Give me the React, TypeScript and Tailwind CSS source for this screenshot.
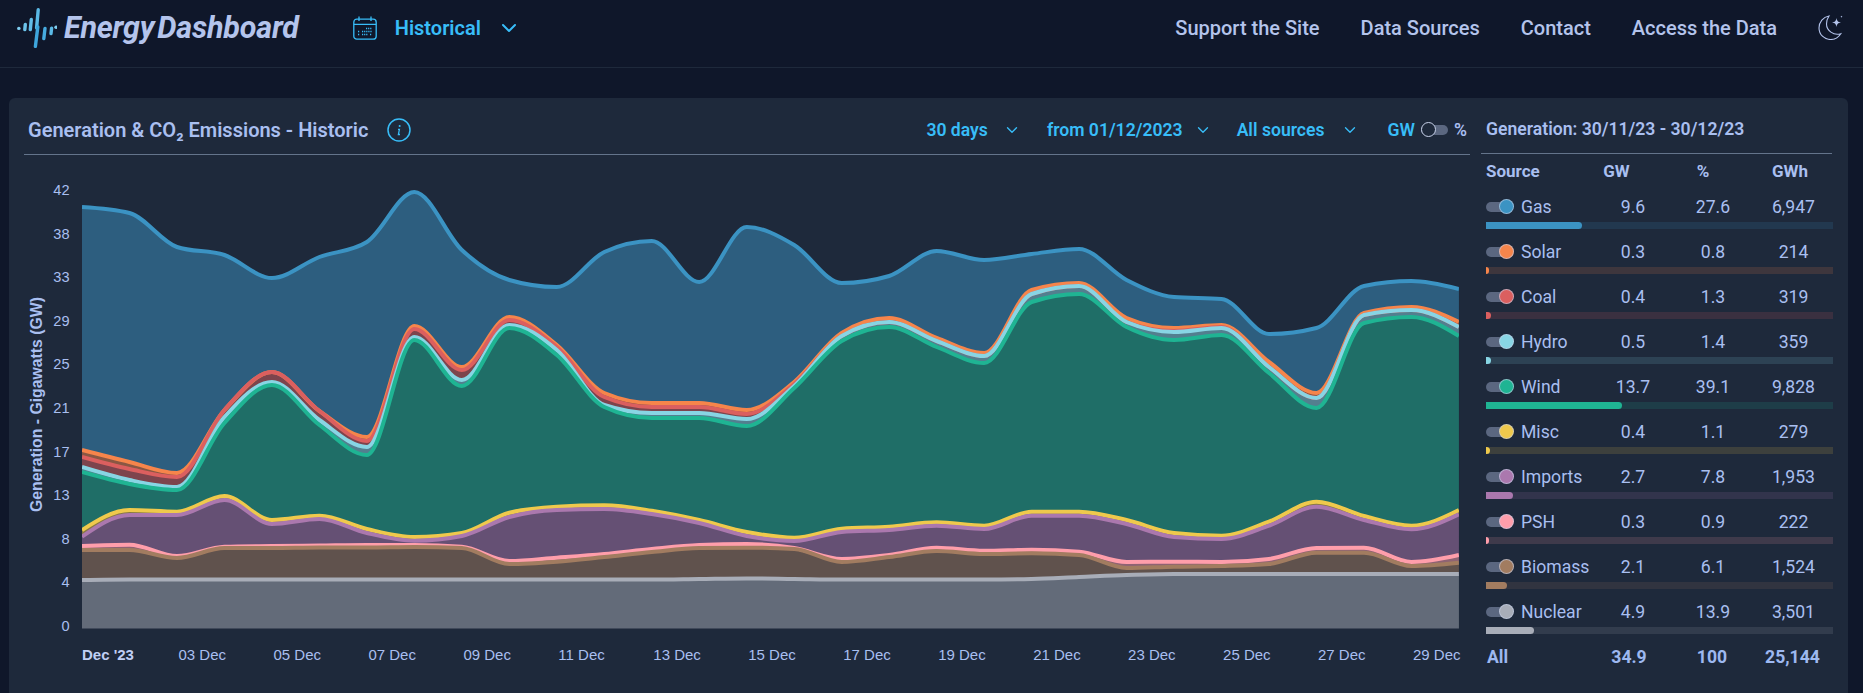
import { ChevronDown } from "lucide-react";

const X0 = 82;
const STEP = 47.48;
const BOTTOM = 628.5;

// bottom of the stack first
const series = [
  { name: "Nuclear", stroke: "#a8adb8", tops: [580,579.5,579.5,579.5,579.5,579.5,579.5,579.5,579.5,579.5,579.5,579.5,579.5,579,578.5,579,579.5,579.5,579.5,579.5,579,577,575,574,574,574,574,574,574,574] },
  { name: "Biomass", stroke: "#a27c60", tops: [550,550,558,548,548,547.5,547.5,547,548,564,561.7,557,552,548,547.7,549,562,557,551,554,553.3,555,568,566.7,566,564,552.7,552.7,566,562.7] },
  { name: "PSH", stroke: "#ff9eab", tops: [546,544.7,556,546.7,546,545.5,545,545,546.7,561,557.7,554,549,545,544,548,559,555,547.7,550.7,549.7,551.7,562,561.7,562,559,548,547.7,562,555] },
  { name: "Imports", stroke: "#ab78ae", tops: [536.7,515,515,500,524,519,533,540.7,536,517,510,509,514,523,536,541,532,530,525.7,529,515.7,515.7,524,537,539,525.7,506.7,520,529.3,514.3] },
  { name: "Misc", stroke: "#efc94c", tops: [530,510,511.7,496,520,515.7,529,537,533,512.7,506.7,505.3,510.7,520,532,537.7,528.7,526.7,522.3,525.7,511.7,511.7,520,533,535.7,521.7,501.7,516,525.7,510] },
  { name: "Wind", stroke: "#1fb493", tops: [472,484,490,423,385,425,455,340,386,328,355,407,418,418,426,388,341,327,347,363,302,294,327,340,335,373,408,323,317,336] },
  { name: "Hydro", stroke: "#88d5e4", tops: [467,480,487,417,382,420,447,337,380,325,350,405,413,413,419,386,336,322,341,356,294,286,322,332,328,367,398,315,310,327] },
  { name: "Coal", stroke: "#db5f5f", tops: [457,469,477,410,372,411,441,329,370,320,347,397,407,407,414,384,336,322,341,356,294,286,322,331,327,367,398,315,310,327] },
  { name: "Solar", stroke: "#f6854b", tops: [450,462,473,410,372,411,437,326,367,317,345,393,403,403,410,382,333,318,338,353,290,283,318,328,325,362,393,313,307,322] },
  { name: "Gas", stroke: "#3b93c3", tops: [207,213,247,255,278,257,242,192,250,280,287,252,241,282,227,245,283,276,251,260,254,249,280,297,299,334,328,286,281,289] },
];

// monotone-x tangents
const tangents = (y: number[]) => {
  const s = y.slice(1).map((v, i) => (v - y[i]) / STEP);
  const t = y.map((_, i) => {
    if (i === 0 || i === y.length - 1) return 0;
    const a = s[i - 1];
    const b = s[i];
    return (Math.sign(a) + Math.sign(b)) * Math.min(Math.abs(a), Math.abs(b), 0.25 * Math.abs(a + b));
  });
  t[0] = (3 * s[0] - t[1]) / 2;
  t[y.length - 1] = (3 * s[s.length - 1] - t[y.length - 2]) / 2;
  return t;
};

const px = (i: number) => X0 + i * STEP;

const linePath = (y: number[]) => {
  const t = tangents(y);
  let d = `M${px(0)},${y[0]}`;
  for (let i = 0; i < y.length - 1; i++) {
    d += `C${px(i) + STEP / 3},${y[i] + (STEP * t[i]) / 3},${px(i + 1) - STEP / 3},${y[i + 1] - (STEP * t[i + 1]) / 3},${px(i + 1)},${y[i + 1]}`;
  }
  return d;
};

const backPath = (y: number[]) => {
  const t = tangents(y);
  let d = `L${px(y.length - 1)},${y[y.length - 1]}`;
  for (let i = y.length - 1; i > 0; i--) {
    d += `C${px(i) - STEP / 3},${y[i] - (STEP * t[i]) / 3},${px(i - 1) + STEP / 3},${y[i - 1] + (STEP * t[i - 1]) / 3},${px(i - 1)},${y[i - 1]}`;
  }
  return d + "Z";
};

const yTicks: [string, number][] = [["42",190],["38",234],["33",277],["29",321],["25",364],["21",408],["17",452],["13",495],["8",539],["4",582],["0",626]];
const xTicks = ["03 Dec","05 Dec","07 Dec","09 Dec","11 Dec","13 Dec","15 Dec","17 Dec","19 Dec","21 Dec","23 Dec","25 Dec","27 Dec","29 Dec"];

const rows = [
  { name: "Gas", gw: "9.6", pct: "27.6", gwh: "6,947", w: 27.6, dot: "bg-[#3b93c3]", track: "bg-[#3b93c3]/15" },
  { name: "Solar", gw: "0.3", pct: "0.8", gwh: "214", w: 0.8, dot: "bg-[#f6854b]", track: "bg-[#f6854b]/15" },
  { name: "Coal", gw: "0.4", pct: "1.3", gwh: "319", w: 1.3, dot: "bg-[#db5f5f]", track: "bg-[#db5f5f]/15" },
  { name: "Hydro", gw: "0.5", pct: "1.4", gwh: "359", w: 1.4, dot: "bg-[#88d5e4]", track: "bg-[#88d5e4]/15" },
  { name: "Wind", gw: "13.7", pct: "39.1", gwh: "9,828", w: 39.1, dot: "bg-[#1fb493]", track: "bg-[#1fb493]/15" },
  { name: "Misc", gw: "0.4", pct: "1.1", gwh: "279", w: 1.1, dot: "bg-[#efc94c]", track: "bg-[#efc94c]/15" },
  { name: "Imports", gw: "2.7", pct: "7.8", gwh: "1,953", w: 7.8, dot: "bg-[#ab78ae]", track: "bg-[#ab78ae]/15" },
  { name: "PSH", gw: "0.3", pct: "0.9", gwh: "222", w: 0.9, dot: "bg-[#ff9eab]", track: "bg-[#ff9eab]/15" },
  { name: "Biomass", gw: "2.1", pct: "6.1", gwh: "1,524", w: 6.1, dot: "bg-[#a27c60]", track: "bg-[#a27c60]/15" },
  { name: "Nuclear", gw: "4.9", pct: "13.9", gwh: "3,501", w: 13.9, dot: "bg-[#a8adb8]", track: "bg-[#a8adb8]/15" },
];

const Logo = () => (
  <svg width="40" height="40" viewBox="17 7 40 40" fill="none" strokeLinecap="round" className="shrink-0">
    <g strokeWidth="3.4">
      <path d="M18.8 27.4h.1" stroke="#7fcdf0" />
      <path d="M25.3 23.5 24.8 28.6" stroke="#6cc3ea" />
      <path d="M31.3 18.5 30.3 28.6" stroke="#62bde8" />
      <path d="M38.2 8.8 36.6 27" stroke="#5ab9e6" />
      <path d="M37.8 26 35.4 45.4" stroke="#3ea6dc" />
      <path d="M45 27.4 43.8 37.6" stroke="#46abdf" />
      <path d="M51.6 27.2 51 32.6" stroke="#5ab9e6" />
      <path d="M56 26.2h.1" stroke="#7fcdf0" />
    </g>
  </svg>
);

const CalendarIcon = () => (
  <svg width="24" height="24" viewBox="0 0 24 24" fill="none" stroke="#38bdf8" strokeWidth="1.3" className="shrink-0">
    <rect x="0.8" y="3.2" width="22.4" height="20" rx="3" />
    <path d="M0.8 8.4h22.4M6 0.5v4.4M18 0.5v4.4" />
    <path d="M5 18.5h2M9 18.5h6M17 18.5h2M9 15.5h10M13 12.5h6M5 15.5h2" strokeWidth="1.4" strokeDasharray="1.2 0.9" />
  </svg>
);

const MoonIcon = () => (
  <svg width="25" height="25" viewBox="0 0 25 25" fill="none" className="shrink-0">
    <path d="M11 1C5.2 2 1 7 1 13c0 6.6 5.3 11.5 11.5 11.5 4.4 0 8-2.2 10.3-5.8C15.5 21 8.5 15.5 8.5 9c0-3 1-5.8 2.5-8Z" stroke="#b4c4ec" strokeWidth="1.1" />
    <path d="M18.5 3c.5 3 1.4 4 4.5 4.5-3.1.5-4 1.5-4.5 4.5-.5-3-1.4-4-4.5-4.5 3.1-.5 4-1.5 4.5-4.5Z" fill="#b4c4ec" />
    <path d="M23.5 0.5c.1.8.4 1.1 1.2 1.2-.8.1-1.1.4-1.2 1.2-.1-.8-.4-1.1-1.2-1.2.8-.1 1.1-.4 1.2-1.2Z" fill="#b4c4ec" />
  </svg>
);

const InfoIcon = () => (
  <svg width="24" height="24" viewBox="0 0 24 24" fill="none" stroke="#38bdf8" strokeWidth="1.5" className="shrink-0">
    <circle cx="12" cy="12" r="11" />
    <path d="M12.6 8h.1" strokeWidth="2" strokeLinecap="round" />
    <path d="M11 11.3h1.4l-1 5.2h1.6" strokeWidth="1.3" />
  </svg>
);

const Picker = ({ label, className }: { label: string; className: string }) => (
  <div className={`flex items-center text-[#38bdf8] ${className}`}>
    <span>{label}</span>
    <ChevronDown size={18} strokeWidth={1.8} />
  </div>
);

const Chart = () => (
  <svg width="1461" height="538" viewBox="9 155 1461 538" className="block">
    <text x="41.5" y="404.5" transform="rotate(-90 41.5 404.5)" textAnchor="middle" fontFamily="Liberation Sans" fontWeight="700" fontSize="15.8" fill="#a9bff0">
      Generation - Gigawatts (GW)
    </text>
    {yTicks.map(([label, y]) => (
      <text key={label} x="69.5" y={y + 5} textAnchor="end" fontFamily="Liberation Sans" fontSize="14.6" fill="#a9bff0">
        {label}
      </text>
    ))}
    <text x="82" y="660" fontFamily="Liberation Sans" fontWeight="700" fontSize="15" fill="#c0cff5">
      Dec '23
    </text>
    {xTicks.map((label, i) => (
      <text key={label} x={178.5 + i * 94.96} y="660" fontFamily="Liberation Sans" fontSize="15" fill="#a9bff0">
        {label}
      </text>
    ))}
    {series.map((s, i) => {
      const below = i === 0 ? null : series[i - 1].tops;
      const d = below ? linePath(s.tops) + backPath(below) : `${linePath(s.tops)}L${px(29)},${BOTTOM}L${X0},${BOTTOM}Z`;
      return <path key={s.name} d={d} fill={s.stroke} fillOpacity="0.5" />;
    })}
    <clipPath id="plot">
      <rect x={X0} y="160" width={STEP * 29} height={BOTTOM - 160} />
    </clipPath>
    {/* lines go top of the stack first, lower sources cover the thin bands */}
    <g clipPath="url(#plot)">
      {[...series].reverse().map((s) => (
        <path key={s.name} d={linePath(s.tops)} fill="none" stroke={s.stroke} strokeWidth="4" />
      ))}
    </g>
  </svg>
);

const App = () => {
  return (
    <div className="h-screen overflow-hidden bg-[#0f172a] font-['Roboto',sans-serif] text-[#a9bff0]">
      <header className="flex h-[68px] items-center border-b border-[#1e293b] pb-[12px] pl-[17px] pr-[20px]">
        <Logo />
        <span className="ml-[7px] text-[30.5px] font-bold italic tracking-[-0.2px] text-[#b4c4ec]">
          Energy<span className="ml-[3px]">Dashboard</span>
        </span>
        <div className="ml-[54px]">
          <CalendarIcon />
        </div>
        <span className="ml-[18px] text-[20px] font-semibold text-[#38bdf8]">Historical</span>
        <ChevronDown size={24} strokeWidth={2} className="ml-[16px] text-[#38bdf8]" />
        <nav className="ml-auto flex items-center gap-[41px] text-[20px] font-medium text-[#b4c4ec]">
          <span>Support the Site</span>
          <span>Data Sources</span>
          <span>Contact</span>
          <span>Access the Data</span>
          <MoonIcon />
        </nav>
      </header>

      <main className="ml-[9px] mr-[15px] mt-[30px] flex h-[640px] rounded-md bg-[#1e293b]">
        <section className="w-[1461px] shrink-0">
          <div className="ml-[15px] flex h-[57px] items-center border-b border-[#64748b] pl-[4px] pt-[8px]">
            <h2 className="text-[20px] font-semibold">Generation &amp; CO₂ Emissions - Historic</h2>
            <div className="ml-[19px]">
              <InfoIcon />
            </div>
            <div className="ml-auto flex items-center text-[17.6px] font-semibold">
              <Picker label="30 days" className="gap-[15px]" />
              <Picker label="from 01/12/2023" className="ml-[26px] gap-[11px]" />
              <Picker label="All sources" className="ml-[25px] gap-[16px]" />
              <span className="ml-[29px] text-[#38bdf8]">GW</span>
              <span className="relative ml-[6px] h-[10px] w-[27px] rounded-full bg-[#5b6780]">
                <span className="absolute left-0 top-[-3px] h-[15px] w-[15px] rounded-full border border-[#c8d2ea] bg-[#1e293b]" />
              </span>
              <span className="ml-[6px] mr-[3px]">%</span>
            </div>
          </div>
          <Chart />
        </section>

        <section className="ml-[11px] w-[351px] shrink-0">
          <div className="flex h-[56px] items-center border-b border-[#64748b] pl-[5px] pt-[8px] text-[17.6px] font-semibold">
            Generation: 30/11/23 - 30/12/23
          </div>
          <div className="ml-[5px] grid h-[38px] grid-cols-[106px_80px_80px_81px] items-center pb-[2px] text-[17px] font-bold">
            <span>Source</span>
            <span className="pr-[31px] text-center">GW</span>
            <span className="pr-[18px] text-center">%</span>
            <span className="pr-[5px] text-center">GWh</span>
          </div>
          {rows.map((r) => (
            <div key={r.name} className="ml-[5px] h-[45px] w-[347px]">
              <div className="grid h-[30px] grid-cols-[106px_80px_80px_81px] items-center text-[17.6px]">
                <div className="flex items-center">
                  <span className="relative h-[10px] w-[24px] rounded-full bg-[#5b6780]">
                    <span className={`absolute left-[13px] top-[-3px] h-[15px] w-[15px] rounded-full border border-[#c8d2ea]/60 ${r.dot}`} />
                  </span>
                  <span className="ml-[11px]">{r.name}</span>
                </div>
                <span className="pl-[2px] text-center">{r.gw}</span>
                <span className="pl-[2px] text-center">{r.pct}</span>
                <span className="pl-[2px] text-center">{r.gwh}</span>
              </div>
              <div className={`h-[7px] ${r.track}`}>
                <div className={`h-full rounded-r-full ${r.dot}`} style={{ width: `${r.w}%` }} />
              </div>
            </div>
          ))}
          <div className="ml-[5px] grid h-[30px] w-[347px] grid-cols-[106px_80px_80px_81px] items-center text-[17.6px] font-bold text-[#9db8f0]">
            <span className="pl-[1px]">All</span>
            <span className="pr-[6px] text-center">34.9</span>
            <span className="text-center">100</span>
            <span className="text-center">25,144</span>
          </div>
        </section>
      </main>
    </div>
  );
};

export default App;
